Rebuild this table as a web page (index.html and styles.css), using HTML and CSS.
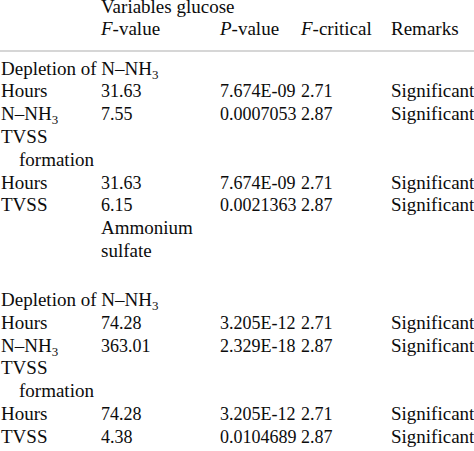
FILE: index.html
```html
<!DOCTYPE html>
<html>
<head>
<meta charset="utf-8">
<link rel="stylesheet" href="styles.css">
</head>
<body>
<table class="anova">
  <colgroup>
    <col class="c1"><col class="c2"><col class="c3"><col class="c4"><col class="c5">
  </colgroup>
  <thead>
    <tr><td></td><td colspan="4">Variables glucose</td></tr>
    <tr class="last"><td></td><td><i>F</i>-value</td><td><i>P</i>-value</td><td><i>F</i>-critical</td><td>Remarks</td></tr>
  </thead>
  <tbody>
    <tr class="first"><td colspan="5">Depletion of N–NH<sub>3</sub></td></tr>
    <tr><td>Hours</td><td class="num">31.63</td><td class="num">7.674E-09</td><td class="num">2.71</td><td>Significant</td></tr>
    <tr><td>N–NH<sub>3</sub></td><td class="num">7.55</td><td class="num">0.0007053</td><td class="num">2.87</td><td>Significant</td></tr>
    <tr><td class="hang">TVSS<br>formation</td><td></td><td></td><td></td><td></td></tr>
    <tr><td>Hours</td><td class="num">31.63</td><td class="num">7.674E-09</td><td class="num">2.71</td><td>Significant</td></tr>
    <tr><td>TVSS</td><td class="num">6.15</td><td class="num">0.0021363</td><td class="num">2.87</td><td>Significant</td></tr>
    <tr><td></td><td colspan="4">Ammonium<br>sulfate</td></tr>
    <tr class="spacer"><td colspan="5"></td></tr>
    <tr><td colspan="5">Depletion of N–NH<sub>3</sub></td></tr>
    <tr><td>Hours</td><td class="num">74.28</td><td class="num">3.205E-12</td><td class="num">2.71</td><td>Significant</td></tr>
    <tr><td>N–NH<sub>3</sub></td><td class="num">363.01</td><td class="num">2.329E-18</td><td class="num">2.87</td><td>Significant</td></tr>
    <tr><td class="hang">TVSS<br>formation</td><td></td><td></td><td></td><td></td></tr>
    <tr><td>Hours</td><td class="num">74.28</td><td class="num">3.205E-12</td><td class="num">2.71</td><td>Significant</td></tr>
    <tr><td>TVSS</td><td class="num">4.38</td><td class="num">0.0104689</td><td class="num">2.87</td><td>Significant</td></tr>
  </tbody>
</table>
</body>
</html>
```
FILE: styles.css
```css
html, body {
  margin: 0;
  padding: 0;
  background: #ffffff;
}
body {
  overflow: hidden;
  color: #0c0c0c;
  font-family: "Liberation Serif", "Times New Roman", serif;
  font-size: 19px;
}
.anova {
  margin-top: -4.5px;
  width: 474px;
  table-layout: fixed;
  border-collapse: collapse;
  border-spacing: 0;
}
.c1 { width: 101px; }
.c2 { width: 119px; }
.c3 { width: 81px; }
.c4 { width: 90px; }
.c5 { width: 83px; }
.anova td {
  padding: 0;
  line-height: 22.8px;
  white-space: nowrap;
  vertical-align: top;
  overflow: visible;
}
.anova td:first-child {
  padding-left: 1px;
}
.anova td.num {
  font-size: 18px;
}
.anova sub {
  font-size: 0.68em;
  line-height: 0;
  vertical-align: -0.28em;
}
.anova thead tr.last td {
  padding-bottom: 8.5px;
  border-bottom: 2px solid #d6d6d6;
}
.anova tbody tr.first td {
  padding-top: 6px;
}
.anova td.hang {
  padding-left: 19px;
  text-indent: -18px;
}
.anova tr.spacer td {
  height: 26.3px;
  line-height: 0;
}
```
